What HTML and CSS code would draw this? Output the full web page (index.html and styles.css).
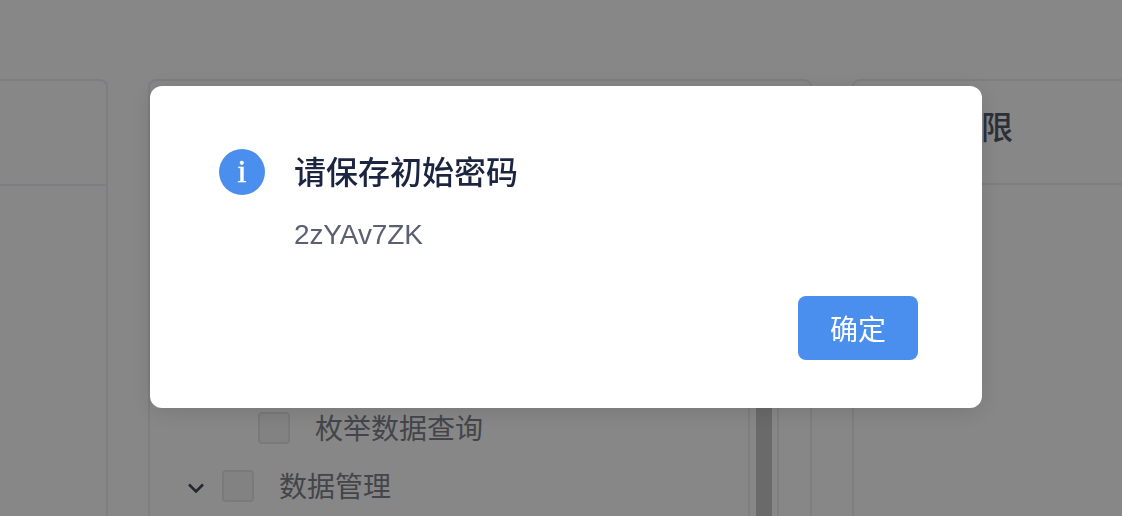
FILE: index.html
```html
<!DOCTYPE html>
<html lang="zh">
<head>
<meta charset="utf-8">
<title>请保存初始密码</title>
<link rel="stylesheet" href="styles.css">
</head>
<body>
<main class="page">
  <section class="card card-left">
    <div class="card-head"></div>
  </section>
  <section class="card card-mid">
    <div class="card-head"></div>
    <div class="tree-wrap">
      <div class="tree">
        <div class="row row-child"><span class="check"></span><span class="label">枚举数据查询</span></div>
        <div class="row"><svg class="chev" viewBox="0 0 18 12"><path d="M2 2.5 9 9.5 16 2.5"/></svg><span class="check"></span><span class="label">数据管理</span></div>
      </div>
      <div class="scroll"><div class="thumb"></div></div>
    </div>
  </section>
  <section class="card card-right">
    <div class="card-head"><h2 class="card-title">功能权限</h2></div>
  </section>
</main>
<div class="overlay">
  <div class="dialog" role="dialog">
    <div class="dialog-head">
      <span class="info-icon">i</span>
      <h3 class="dialog-title">请保存初始密码</h3>
    </div>
    <p class="dialog-msg">2zYAv7ZK</p>
    <div class="dialog-foot"><button class="btn" type="button">确定</button></div>
  </div>
</div>
</body>
</html>
```
FILE: styles.css
```css
* { box-sizing: border-box; }
html, body { margin: 0; height: 100%; overflow: hidden; background: #fff; }
body { font-family: "Liberation Sans", "Noto Sans CJK SC", sans-serif; }
.page { display: flex; gap: 40px; height: 516px; padding-top: 79px; margin-left: -21px; width: 1180px; overflow: hidden; }
.card { border: 2px solid #ebeef5; border-radius: 8px; height: 600px; background: #fff; flex: none; }
.card-left { width: 129px; }
.card-mid { width: 664px; }
.card-right { width: 330px; }
.card-head { height: 105px; border-bottom: 2px solid #ebeef5; padding: 25px 31px 0; }
.card-right .card-head { height: 104px; }
.card-title { margin: 0; font-size: 32px; line-height: 44px; font-weight: 500; color: #555a6b; }
.tree-wrap { display: flex; height: 500px; }
.tree { width: 600px; border-right: 2px solid #ebeef5; padding: 213px 0 0 34px; }
.row { display: flex; align-items: center; height: 58px; color: #80838d; font-size: 28px; }
.row-child { padding-left: 74px; }
.label { padding-bottom: 2px; }
.chev { width: 18px; height: 12px; margin: 4px 17px 0 3px; fill: none; stroke: #454a5a; stroke-width: 2.6; }
.check { width: 32px; height: 32px; border: 2px solid #e6e6e6; border-radius: 4px; background: #f5f5f5; margin-right: 25px; flex: none; }
.scroll { width: 29px; border-right: 2px solid #ebeef5; padding-left: 6px; }
.thumb { width: 16px; height: 100%; background: #c8c8c8; }
.overlay { position: fixed; inset: 0; background: rgba(0, 0, 0, .47); padding: 86px 0 0 150px; }
.dialog { width: 832px; height: 322px; background: #fff; border-radius: 12px; box-shadow: 0 4px 24px rgba(0, 0, 0, .12); padding: 63px 64px 0 69px; }
.dialog-head { display: flex; align-items: center; gap: 29px; height: 46px; }
.info-icon { width: 46px; height: 46px; border-radius: 50%; background: #4a8eee; color: #fff; font: 400 32px/45px "Liberation Serif", serif; -webkit-text-stroke: .5px #fff; text-align: center; flex: none; }
.dialog-title { margin: 0; padding-top: 2px; font-size: 32px; line-height: 46px; font-weight: 500; color: #1c2540; }
.dialog-msg { margin: 22px 0 0 75px; font-size: 28px; line-height: 36px; color: #5a6072; letter-spacing: -.1px; }
.dialog-foot { display: flex; justify-content: flex-end; margin-top: 43px; }
.btn { width: 120px; height: 64px; border: 0; border-radius: 8px; background: #4a8eee; color: #fff; font: 28px "Liberation Sans", "Noto Sans CJK SC", sans-serif; padding: 0; }
```
